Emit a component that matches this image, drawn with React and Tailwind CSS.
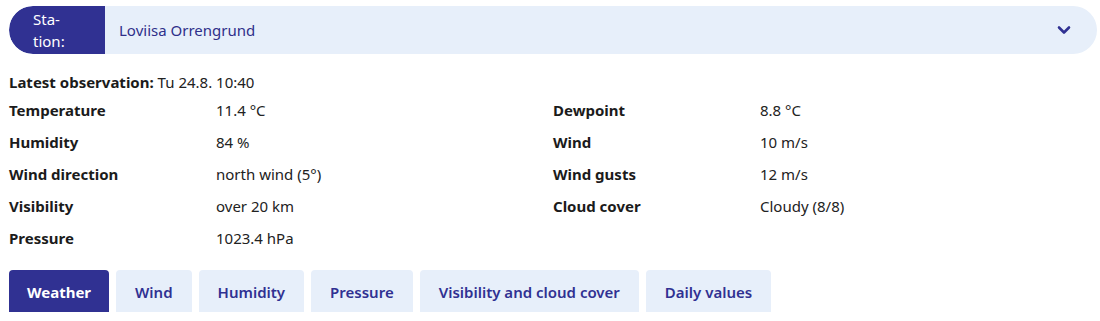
import React, { useState } from 'react';

const left = [
  ['Temperature', '11.4 °C'],
  ['Humidity', '84 %'],
  ['Wind direction', 'north wind (5°)'],
  ['Visibility', 'over 20 km'],
  ['Pressure', '1023.4 hPa'],
];

const right = [
  ['Dewpoint', '8.8 °C'],
  ['Wind', '10 m/s'],
  ['Wind gusts', '12 m/s'],
  ['Cloud cover', 'Cloudy (8/8)'],
];

const tabs = ['Weather', 'Wind', 'Humidity', 'Pressure', 'Visibility and cloud cover', 'Daily values'];

const Rows = ({ items }) => (
  <div className='flex flex-col'>
    {items.map(([label, value]) => (
      <div key={label} className='flex h-8 items-center'>
        <span className='w-[207px] font-bold text-[#1b1b1b]'>{label}</span>
        <span className='text-[#222]'>{value}</span>
      </div>
    ))}
  </div>
);

export default function App() {
  const [active, setActive] = useState('Weather');

  return (
    <div className='bg-white pl-[9px] pr-[3px] pt-[6px] text-[15px]' style={{ fontFamily: '"Noto Sans", "Open Sans", sans-serif' }}>
      <div className='flex h-12 items-stretch rounded-full bg-[#e7effa] overflow-hidden'>
        <div className='flex w-24 flex-col justify-center rounded-l-full bg-[#303192] pl-6 text-[15px] leading-[22px] text-white'>
          <span>Sta-</span>
          <span>tion:</span>
        </div>
        <div className='flex flex-1 items-center justify-between pl-[14px] pr-[25px] text-[#2f2f8a]'>
          <span>Loviisa Orrengrund</span>
          <svg width='16' height='16' viewBox='0 0 16 16' fill='none' stroke='#303192' strokeWidth='2.6' strokeLinecap='round' strokeLinejoin='round'>
            <path d='M3 5.5l5 5 5-5' />
          </svg>
        </div>
      </div>

      <div className='mt-[17px] text-[#222]'>
        <span className='font-bold text-[#1b1b1b]'>Latest observation:</span> Tu 24.8. 10:40
      </div>

      <div className='mt-[1px] grid grid-cols-2'>
        <Rows items={left} />
        <Rows items={right} />
      </div>

      <div className='mt-[15px] flex gap-[7px]'>
        {tabs.map((t) => (
          <button
            key={t}
            onClick={() => setActive(t)}
            className={
              active === t
                ? 'h-[42px] rounded-t px-[18px] pt-1 font-bold text-white bg-[#303192]'
                : 'h-[42px] rounded-t px-[19px] pt-1 font-semibold text-[#303192] bg-[#e7effa]'
            }
          >
            {t}
          </button>
        ))}
      </div>
    </div>
  );
}
